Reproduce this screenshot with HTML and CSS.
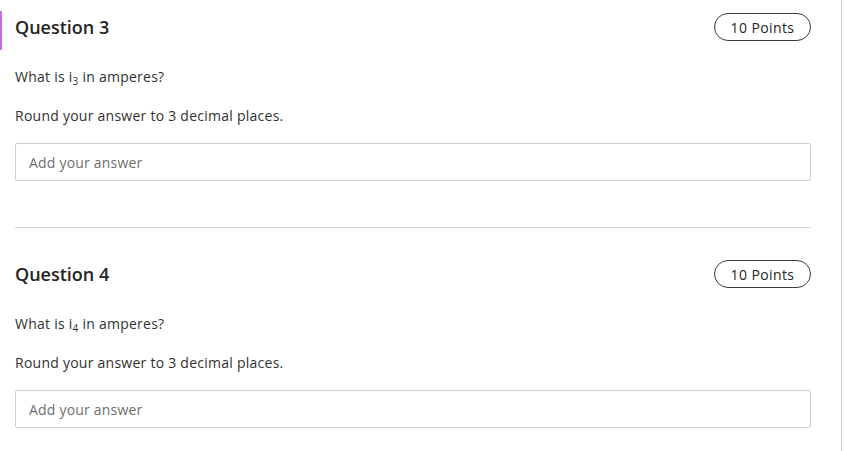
FILE: index.html
```html
<!DOCTYPE html>
<html lang="en">
<head>
<meta charset="utf-8">
<title>Questions</title>
<link rel="stylesheet" href="styles.css">
</head>
<body>
<div class="page">
  <section class="question active">
    <div class="q-head">
      <h2 class="q-title">Question 3</h2>
      <span class="points">10 Points</span>
    </div>
    <p class="q-text">What is i<sub>3</sub> in amperes?</p>
    <p class="q-text q-note">Round your answer to 3 decimal places.</p>
    <div class="answer">Add your answer</div>
  </section>
  <hr class="divider">
  <section class="question">
    <div class="q-head">
      <h2 class="q-title">Question 4</h2>
      <span class="points">10 Points</span>
    </div>
    <p class="q-text">What is i<sub>4</sub> in amperes?</p>
    <p class="q-text q-note">Round your answer to 3 decimal places.</p>
    <div class="answer">Add your answer</div>
  </section>
</div>
</body>
</html>
```

FILE: styles.css
```css
html, body {
  margin: 0;
  padding: 0;
  background: #ffffff;
}
body {
  font-family: "Open Sans", "Noto Sans", sans-serif;
  color: #323130;
}
.page {
  width: 796px;
  height: 451px;
  padding: 0 30px 0 15px;
  border-right: 1px solid #cfcfcf;
  box-sizing: content-box;
  overflow: hidden;
}
.question {
  position: relative;
  padding-top: 13px;
}
.question.active::before {
  content: "";
  position: absolute;
  left: -15px;
  top: 11px;
  width: 2px;
  height: 39px;
  background: #c66fd8;
}
.q-head {
  display: flex;
  align-items: center;
  justify-content: space-between;
  height: 28px;
}
.q-title {
  margin: 0;
  font-size: 18px;
  font-weight: 600;
  color: #252423;
  line-height: 28px;
}
.points {
  display: flex;
  align-items: center;
  justify-content: center;
  box-sizing: border-box;
  width: 97px;
  height: 28px;
  border: 1px solid #3b3a39;
  border-radius: 14px;
  font-size: 14px;
  letter-spacing: 0.4px;
  color: #252423;
}
.q-text {
  margin: 26px 0 0;
  font-size: 14px;
  letter-spacing: 0.25px;
  line-height: 20px;
}
.q-note {
  margin-top: 19px;
}
.q-text sub {
  font-size: 10px;
  line-height: 0;
  vertical-align: -3px;
}
.answer {
  box-sizing: border-box;
  margin-top: 17px;
  height: 38px;
  border: 1px solid #cfcfcf;
  border-radius: 2px;
  padding: 0 13px;
  display: flex;
  align-items: center;
  font-size: 14px;
  letter-spacing: 0.2px;
  color: #6e6e6e;
}
.divider {
  margin: 46px 0 0;
  border: 0;
  border-top: 1px solid #d6d6d6;
  height: 0;
}
.divider + .question {
  padding-top: 32px;
}
```
